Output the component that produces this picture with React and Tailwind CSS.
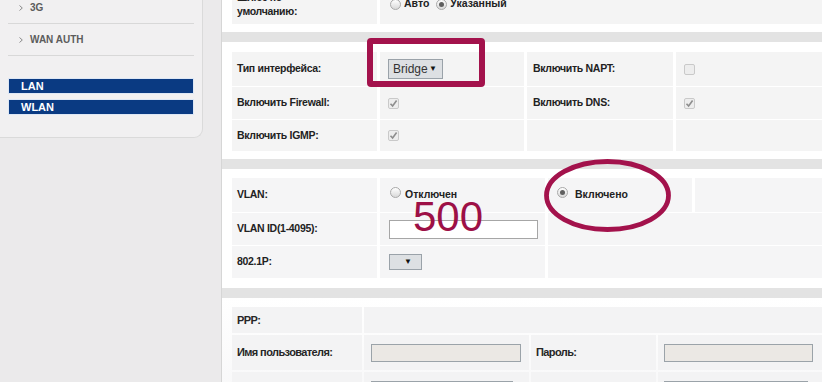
import React from "react";

const Radio = ({ checked = false, className = "" }) => (
    <span
        className={`inline-flex h-[11px] w-[11px] shrink-0 items-center justify-center rounded-full border border-[#a9a9a9] bg-gradient-to-b from-[#ffffff] to-[#d9d9d9] ${className}`}
    >
        {checked && <span className="h-[5px] w-[5px] rounded-full bg-[#5f5f5f]" />}
    </span>
);

const Checkbox = ({ checked = false }) => (
    <span className="inline-flex h-[11px] w-[11px] items-center justify-center rounded-[2px] border border-[#c9c9c9] bg-[#ededed]">
        {checked && (
            <svg width="9" height="9" viewBox="0 0 9 9">
                <path d="M1.5 4.8 L3.6 7 L7.6 1.6" fill="none" stroke="#8d8d8d" strokeWidth="1.6" />
            </svg>
        )}
    </span>
);

const Select = ({ label, className = "" }) => (
    <span
        className={`inline-flex items-center justify-between border border-[#9aa2a9] bg-[#dde0e3] text-[12px] text-[#333] ${className}`}
    >
        <span>{label}</span>
        <span className="text-[8px] text-[#111]">▼</span>
    </span>
);

const Label = ({ children, className = "" }) => (
    <div className={`flex items-center bg-[#f4f4f4] pl-[5px] text-[10.5px] font-bold tracking-[-0.3px] text-[#222] ${className}`}>
        {children}
    </div>
);

const Cell = ({ children, className = "" }) => (
    <div className={`flex items-center bg-[#f4f4f4] ${className}`}>{children}</div>
);

const PppLabel = ({ children }) => (
    <div className="flex items-center bg-[#f3f3f4] pl-[5px] text-[11px] font-bold tracking-[-0.6px] text-[#262626]">
        {children}
    </div>
);

const PppInput = ({ width = "w-[150px]" }) => (
    <span className={`h-[18px] ${width} border border-[#9ba3a9] bg-[#ebe8e4]`} />
);

const SideItem = ({ children }) => (
    <div className="flex h-[32px] items-center border-b border-[#d8d8d8] pl-[11px] text-[10px] font-bold text-[#5c5c5c]">
        <svg width="4" height="6" viewBox="0 0 4 6" className="mr-[7px]">
            <path d="M0.5 0.5 L3.3 3 L0.5 5.5" fill="none" stroke="#8a8a8a" strokeWidth="1" />
        </svg>
        {children}
    </div>
);

export default function App() {
    return (
        <div className="relative flex h-[382px] w-[822px] overflow-hidden bg-[#ebeaeb] font-['Liberation_Sans',Arial,sans-serif]">
            {/* Sidebar */}
            <aside className="-mt-[8px] w-[203px] shrink-0 self-start rounded-br-[9px] border-r border-b border-[#dadada] bg-[#f1f0f1] px-[8px] pb-[22px]">
                <SideItem>3G</SideItem>
                <SideItem>WAN AUTH</SideItem>
                <div className="mt-[22px] flex h-[16px] items-center border border-[#dde7f5] bg-[#0a3a82] pl-[12px] text-[11px] font-bold text-white">
                    LAN
                </div>
                <div className="mt-[5px] flex h-[16px] items-center border border-[#dde7f5] bg-[#0a3a82] pl-[12px] text-[11px] font-bold text-white">
                    WLAN
                </div>
            </aside>

            {/* Main content */}
            <main className="-mt-[24px] ml-[18px] flex w-[620px] shrink-0 flex-col gap-[10px] self-start border-l border-[#d6d6d6] bg-[#e3e3e3]">
                {/* Default route */}
                <section className="bg-white px-[10px] pt-[8px] pb-[8px]">
                    <div className="grid h-[40px] grid-cols-[145px_1fr] gap-x-[3px]">
                        <Label className="leading-[14px]">
                            Шлюз по
                            <br />
                            умолчанию:
                        </Label>
                        <Cell className="pl-[10px] text-[10.5px] font-bold text-[#222]">
                            <Radio />
                            <span className="ml-[3px]">Авто</span>
                            <Radio checked className="ml-[7px]" />
                            <span className="ml-[3px]">Указанный</span>
                        </Cell>
                    </div>
                </section>

                {/* Interface */}
                <section className="bg-white px-[10px] pt-[10px] pb-[8px]">
                    <div className="grid grid-cols-[145px_144px_146px_1fr] grid-rows-[34px_32px_31px] gap-x-[3px] gap-y-[1px]">
                        <Label>Тип интерфейса:</Label>
                        <Cell className="pl-[8px]">
                            <Select label="Bridge" className="h-[20px] w-[55px] pl-[4px] pr-[5px]" />
                        </Cell>
                        <Label className="pl-[6px]">Включить NAPT:</Label>
                        <Cell className="pl-[8px]">
                            <Checkbox />
                        </Cell>

                        <Label>Включить Firewall:</Label>
                        <Cell className="pl-[8px]">
                            <Checkbox checked />
                        </Cell>
                        <Label className="pl-[6px]">Включить DNS:</Label>
                        <Cell className="pl-[8px]">
                            <Checkbox checked />
                        </Cell>

                        <Label>Включить IGMP:</Label>
                        <Cell className="pl-[8px]">
                            <Checkbox checked />
                        </Cell>
                        <Cell />
                        <Cell />
                    </div>
                </section>

                {/* VLAN */}
                <section className="bg-white px-[10px] pt-[9px] pb-[10px]">
                    <div className="grid grid-cols-[145px_165px_144px_1fr] grid-rows-[34px_32px_32px] gap-x-[3px] gap-y-[1px] [&>div]:bg-[#f5f5f6]">
                        <Label>VLAN:</Label>
                        <Cell className="pl-[10px] text-[10.5px] font-bold text-[#222]">
                            <Radio className="mb-[6px]" />
                            <span className="ml-[4px]">Отключен</span>
                        </Cell>
                        <Cell className="pl-[9px] text-[10.5px] font-bold text-[#222]">
                            <Radio checked className="mb-[6px]" />
                            <span className="ml-[7px]">Включено</span>
                        </Cell>
                        <Cell />

                        <Label>VLAN ID(1-4095):</Label>
                        <Cell className="pl-[9px]">
                            <span className="h-[19px] w-[149px] border border-[#a6a6a6] bg-white" />
                        </Cell>
                        <Cell className="col-span-2" />

                        <Label>802.1P:</Label>
                        <Cell className="pl-[9px]">
                            <Select label="" className="h-[16px] w-[33px] pr-[9px]" />
                        </Cell>
                        <Cell className="col-span-2" />
                    </div>
                </section>

                {/* PPP */}
                <section className="bg-gradient-to-b from-white to-[#f6f6f7] px-[10px] pt-[9px] pb-[10px]">
                    <div className="grid grid-cols-[130px_165px_125px_1fr] grid-rows-[26px_35px_35px] gap-x-[2px] gap-y-[2px] [&>div]:bg-[#f3f3f4]">
                        <PppLabel>PPP:</PppLabel>
                        <Cell className="col-span-3" />

                        <PppLabel>Имя пользователя:</PppLabel>
                        <Cell className="pl-[7px]">
                            <PppInput />
                        </Cell>
                        <PppLabel>Пароль:</PppLabel>
                        <Cell className="pl-[6px]">
                            <PppInput width="w-[149px]" />
                        </Cell>

                        <PppLabel>&nbsp;</PppLabel>
                        <Cell className="pl-[7px]">
                            <PppInput width="w-[142px]" />
                        </Cell>
                        <PppLabel>&nbsp;</PppLabel>
                        <Cell className="pl-[6px]">
                            <PppInput width="w-[144px]" />
                        </Cell>
                    </div>
                </section>
            </main>

            {/* Annotations drawn over the screenshot */}
            <div className="pointer-events-none absolute left-[367px] top-[38px] h-[49px] w-[118px] rounded-[4px] border-[6px] border-[#a3124c]" />
            <svg className="pointer-events-none absolute left-[543px] top-[157px]" width="130" height="78" viewBox="0 0 130 78">
                <ellipse cx="64.5" cy="38.5" rx="61" ry="34" fill="none" stroke="#a3124c" strokeWidth="4.8" />
            </svg>
            <div className="pointer-events-none absolute left-[413px] top-[196px] text-[42px] leading-none text-[#9d1046]">
                500
            </div>
        </div>
    );
}
